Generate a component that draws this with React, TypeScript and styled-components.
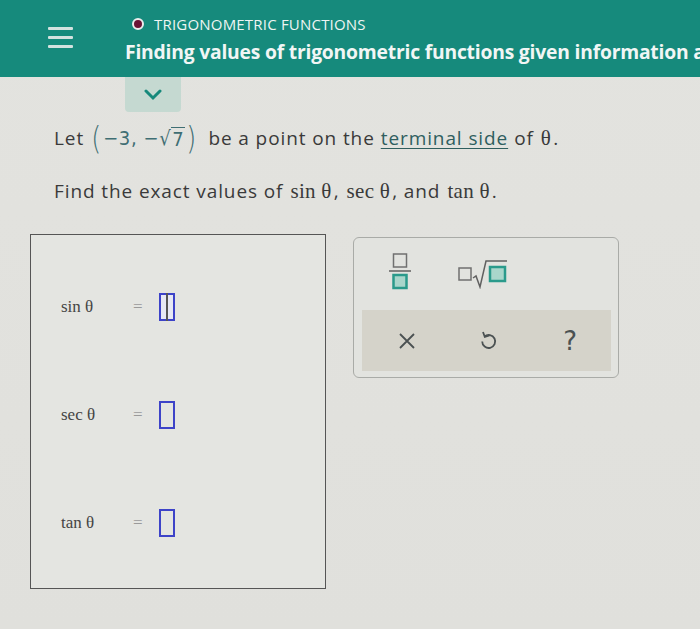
import React from 'react';
import styled, { createGlobalStyle } from 'styled-components';

const GlobalStyle = createGlobalStyle`
  html, body {
    margin: 0;
    padding: 0;
    width: 700px;
    height: 629px;
    overflow: hidden;
    background: #e2e2de;
  }
  * { box-sizing: border-box; }
`;

const Page = styled.div`
  width: 700px;
  height: 629px;
  background: linear-gradient(180deg, #e3e3df 0%, #e0e0dc 100%);
  font-family: "Open Sans", "DejaVu Sans", sans-serif;
  color: #333;
  overflow: hidden;
`;

const Header = styled.header`
  height: 77px;
  background: #168a7c;
  display: flex;
  align-items: flex-start;
  padding-left: 48px;
  overflow: hidden;
`;

const Hamburger = styled.div`
  flex-shrink: 0;
  display: flex;
  flex-direction: column;
  gap: 6px;
  width: 25px;
  margin-top: 27px;

  span {
    display: block;
    height: 3px;
    background: #d3e2df;
    border-radius: 1px;
  }
`;

const TitleBlock = styled.div`
  flex-shrink: 0;
  display: flex;
  flex-direction: column;
  margin-left: 52px;
  padding-top: 14px;
  white-space: nowrap;
`;

const Topic = styled.div`
  display: flex;
  align-items: center;
  gap: 10px;
  color: #eef5f3;
  font-size: 15px;
  letter-spacing: 0.2px;
  margin-left: 7px;
`;

const Dot = styled.span`
  width: 12px;
  height: 12px;
  border-radius: 50%;
  background: #6b1234;
  border: 2px solid #ececec;
`;

const Title = styled.h1`
  margin: 4px 0 0 0;
  color: #f1f6f5;
  font-size: 19.3px;
  font-weight: 700;
  letter-spacing: -0.2px;
`;

const TabRow = styled.div`
  padding-left: 125px;
`;

const ChevronTab = styled.div`
  width: 56px;
  height: 35px;
  background: #c5d9d1;
  border-radius: 0 0 4px 4px;
  display: flex;
  justify-content: center;
  align-items: center;
`;

const Prompt = styled.div`
  padding: 10px 0 0 54px;
  font-size: 19px;
  letter-spacing: 0.9px;
  color: #3a3a3a;
`;

const Line = styled.p<{ $gap?: number }>`
  margin: ${p => p.$gap ?? 0}px 0 0 0;
  display: flex;
  align-items: center;
  white-space: nowrap;
`;

const Coord = styled.span`
  display: inline-flex;
  align-items: center;
  color: #3f6e73;
  margin: 0 10px 0 6px;
  font-family: "DejaVu Sans Condensed", "DejaVu Sans", sans-serif;
  font-size: 20px;
  letter-spacing: 0.6px;
`;

const Paren = styled.span`
  font-size: 32px;
  font-weight: 300;
  line-height: 1;
  font-family: "DejaVu Sans", sans-serif;
  transform: scaleX(0.8);
`;

const Radicand = styled.span`
  border-top: 1.5px solid #3f6e73;
  padding: 0 1px;
  line-height: 1.1;
`;

const Term = styled.span`
  color: #2f5e5e;
  text-decoration: underline;
  text-underline-offset: 3px;
  margin: 0 6px;
`;

const MathFn = styled.span`
  font-family: "Liberation Serif", "Times New Roman", serif;
  font-size: 21px;
  letter-spacing: 0.3px;
  color: #3a3a3a;
  margin: 0 2px 0 7px;
`;

const Workspace = styled.div`
  display: flex;
  align-items: flex-start;
  gap: 27px;
  margin-top: 30px;
  padding-left: 30px;
`;

const AnswerBox = styled.div`
  width: 296px;
  height: 355px;
  border: 1.5px solid #555;
  background: #e4e5e1;
  display: flex;
  flex-direction: column;
  padding: 56px 0 0 30px;
  gap: 76px;
`;

const AnswerRow = styled.div`
  display: flex;
  align-items: center;
  height: 32px;
`;

const Label = styled.span`
  width: 72px;
  font-family: "Liberation Serif", "Times New Roman", serif;
  font-size: 17px;
  color: #444;
`;

const Equals = styled.span`
  width: 26px;
  font-family: "Liberation Serif", serif;
  font-size: 17px;
  color: #9a9a9a;
`;

const Slot = styled.span<{ $active?: boolean }>`
  width: 16px;
  height: 28px;
  border: 2px solid #3d43c8;
  background: ${p => (p.$active ? '#e6e8f4' : 'transparent')};
  position: relative;

  &::after {
    content: '';
    display: ${p => (p.$active ? 'block' : 'none')};
    position: absolute;
    left: 5px;
    top: -2px;
    bottom: -2px;
    width: 2px;
    background: #555;
  }
`;

const ToolPanel = styled.div`
  width: 266px;
  height: 141px;
  margin-top: 3px;
  border: 1.5px solid #a9aba7;
  border-radius: 6px;
  background: #e2e3df;
  display: flex;
  flex-direction: column;
  padding: 0 7px 6px 8px;
`;

const ToolTop = styled.div`
  height: 72px;
  display: flex;
  align-items: center;
  padding-left: 26px;
  gap: 46px;
`;

const ToolBottom = styled.div`
  flex: 1;
  background: #d5d3ca;
  display: grid;
  grid-template-columns: 1fr 1fr 1fr;
  align-items: center;
  justify-items: center;
  color: #4b5152;
  padding-left: 4px;
`;

const ToolButton = styled.span`
  display: flex;
  align-items: center;
  justify-content: center;
  font-size: 26px;
  font-family: "DejaVu Sans", sans-serif;
  line-height: 1;
`;

const FractionIcon = () => (
  <svg width="24" height="38" viewBox="0 0 24 38" style={{ marginTop: -6 }}>
    <rect x="5.5" y="2" width="13" height="13" fill="none" stroke="#707070" strokeWidth="1.5" />
    <line x1="1" y1="19" x2="23" y2="19" stroke="#606060" strokeWidth="1.5" />
    <rect x="5.5" y="23" width="13" height="13" fill="#a9d6cb" stroke="#2a9a8b" strokeWidth="2.5" />
  </svg>
);

const SqrtIcon = () => (
  <svg width="50" height="30" viewBox="0 0 50 30">
    <rect x="1" y="9" width="12" height="12" fill="none" stroke="#707070" strokeWidth="1.5" />
    <path d="M15 19 L18 17 L22 28 L28 2 L49 2" fill="none" stroke="#606060" strokeWidth="1.5" />
    <rect x="32" y="8" width="15" height="14" fill="#a9d6cb" stroke="#2a9a8b" strokeWidth="2.5" />
  </svg>
);

const CloseIcon = () => (
  <svg width="18" height="18" viewBox="0 0 18 18">
    <path d="M2 2 L16 16 M16 2 L2 16" stroke="#4b5152" strokeWidth="1.8" />
  </svg>
);

const UndoIcon = () => (
  <svg width="18" height="22" viewBox="0 0 18 22">
    <path d="M5.5 6.5 A6.5 6.5 0 1 1 3.2 11.5" fill="none" stroke="#4b5152" strokeWidth="1.8" />
    <path d="M4 2 L5.8 7 L10.5 5.5" fill="none" stroke="#4b5152" strokeWidth="1.8" />
  </svg>
);

const Chevron = () => (
  <svg width="18" height="12" viewBox="0 0 18 12">
    <path d="M2 2 L9 9 L16 2" fill="none" stroke="#16897b" strokeWidth="3" strokeLinecap="round" />
  </svg>
);

const App: React.FC = () => {
  return (
    <Page>
      <GlobalStyle />
      <Header>
        <Hamburger>
          <span />
          <span />
          <span />
        </Hamburger>
        <TitleBlock>
          <Topic>
            <Dot />
            TRIGONOMETRIC FUNCTIONS
          </Topic>
          <Title>Finding values of trigonometric functions given information about</Title>
        </TitleBlock>
      </Header>

      <TabRow>
        <ChevronTab>
          <Chevron />
        </ChevronTab>
      </TabRow>

      <Prompt>
        <Line>
          Let
          <Coord>
            <Paren>(</Paren>
            −3, −√<Radicand>7</Radicand>
            <Paren>)</Paren>
          </Coord>
          be a point on the <Term>terminal side</Term> of
          <MathFn>θ</MathFn>.
        </Line>
        <Line $gap={24}>
          Find the exact values of
          <MathFn>sin θ</MathFn>,<MathFn>sec θ</MathFn>, and<MathFn>tan θ</MathFn>.
        </Line>
      </Prompt>

      <Workspace>
        <AnswerBox>
          <AnswerRow>
            <Label>sin θ</Label>
            <Equals>=</Equals>
            <Slot $active />
          </AnswerRow>
          <AnswerRow>
            <Label>sec θ</Label>
            <Equals>=</Equals>
            <Slot />
          </AnswerRow>
          <AnswerRow>
            <Label>tan θ</Label>
            <Equals>=</Equals>
            <Slot />
          </AnswerRow>
        </AnswerBox>

        <ToolPanel>
          <ToolTop>
            <FractionIcon />
            <SqrtIcon />
          </ToolTop>
          <ToolBottom>
            <ToolButton><CloseIcon /></ToolButton>
            <ToolButton><UndoIcon /></ToolButton>
            <ToolButton>?</ToolButton>
          </ToolBottom>
        </ToolPanel>
      </Workspace>
    </Page>
  );
};

export default App;
